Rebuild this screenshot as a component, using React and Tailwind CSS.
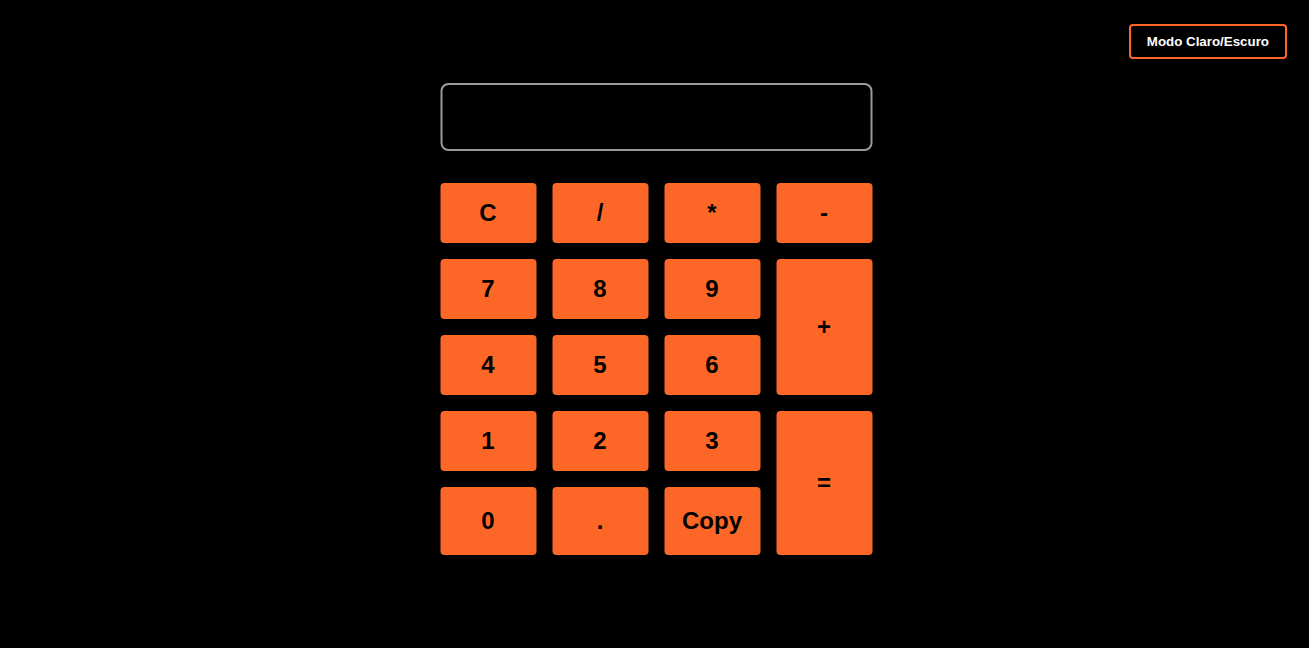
const keys = [
  { label: "C", cls: "" },
  { label: "/", cls: "" },
  { label: "*", cls: "" },
  { label: "-", cls: "" },
  { label: "7", cls: "" },
  { label: "8", cls: "" },
  { label: "9", cls: "" },
  { label: "+", cls: "row-span-2" },
  { label: "4", cls: "" },
  { label: "5", cls: "" },
  { label: "6", cls: "" },
  { label: "1", cls: "" },
  { label: "2", cls: "" },
  { label: "3", cls: "" },
  { label: "=", cls: "row-span-2" },
  { label: "0", cls: "" },
  { label: ".", cls: "" },
  { label: "Copy", cls: "" },
];

export default function App() {
  return (
    <div className="min-h-[648px] bg-black font-['Liberation_Sans',Arial,sans-serif]">
      <div className="flex justify-end pt-6 pr-[22px]">
        <button className="border-2 border-[#fc6727] rounded-[4px] px-4 py-2 text-[13.33px] leading-[15px] font-bold text-white bg-black">
          Modo Claro/Escuro
        </button>
      </div>

      <div className="w-[432px] mx-auto mt-6 translate-x-[1.5px]">
        <div className="h-[68px] border-2 border-[#9a9a9a] rounded-lg"></div>

        <div className="grid grid-cols-4 grid-rows-[60px_60px_60px_60px_68px] gap-4 mt-8">
          {keys.map((k) => (
            <button
              key={k.label}
              className={`${k.cls} bg-[#fc6727] rounded-[4px] text-black text-2xl font-bold flex items-center justify-center`}
            >
              {k.label}
            </button>
          ))}
        </div>
      </div>
    </div>
  );
}
